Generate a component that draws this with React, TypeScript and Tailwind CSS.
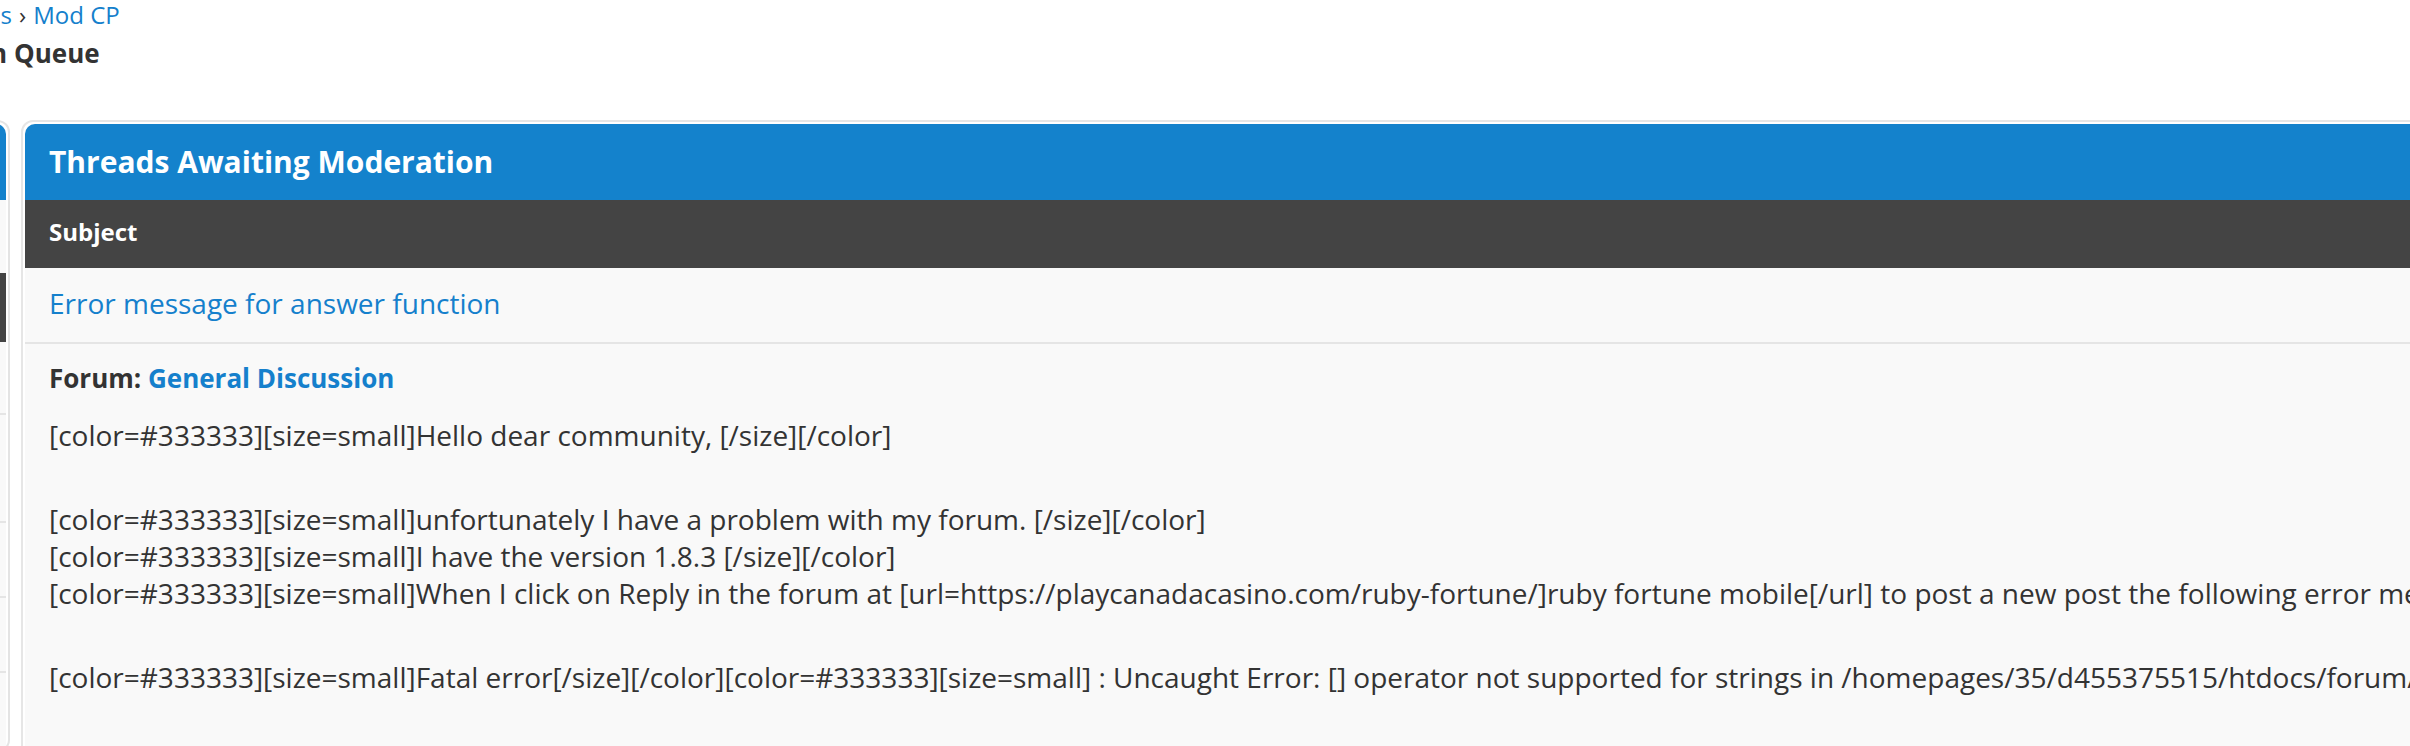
import React from "react";

const POST_LINES = [
  { text: "[color=#333333][size=small]Hello dear community, [/size][/color]", gap: false },
  { text: "[color=#333333][size=small]unfortunately I have a problem with my forum. [/size][/color]", gap: true },
  { text: "[color=#333333][size=small]I have the version 1.8.3 [/size][/color]", gap: false },
  {
    text: "[color=#333333][size=small]When I click on Reply in the forum at [url=https://playcanadacasino.com/ruby-fortune/]ruby fortune mobile[/url] to post a new post the following error message appears: [/size][/color]",
    gap: false,
  },
  {
    text: "[color=#333333][size=small]Fatal error[/size][/color][color=#333333][size=small] : Uncaught Error: [] operator not supported for strings in /homepages/35/d455375515/htdocs/forum/inc/functions.php:1541 [/size][/color]",
    gap: true,
  },
];

// sidebar rows below the dark bar (heights incl. 2px bottom border)
const SIDE_ROWS = ["h-[73px]", "h-[108px]", "h-[75px]", "h-[75px]", "h-[75px]"];

function Sidebar() {
  return (
    <div className="w-[400px] shrink-0 -ml-[390px] border-2 border-[#e4e4e4] rounded-[12px] p-[2px] bg-white">
      <div className="h-[76px] bg-[#1482cc] rounded-t-[10px]" />
      <div className="h-[73px] bg-[#f9f9f9]" />
      <div className="h-[69px] bg-[#444444]" />
      {SIDE_ROWS.map((h, i) => (
        <div key={i} className={`${h} bg-[#f9f9f9] border-b-2 border-[#e5e5e5]`} />
      ))}
    </div>
  );
}

function ModQueue() {
  return (
    <div className="w-[2600px] shrink-0 ml-[11px] border-2 border-[#e6e6e6] rounded-[12px] p-[2px] bg-white">
      <div className="h-[76px] bg-[#1482cc] rounded-t-[10px] px-[24px] text-[30px] leading-[76px] font-bold text-white">
        Threads Awaiting Moderation
      </div>
      <div className="h-[68px] bg-[#444444] px-[24px] text-[24px] leading-[64px] font-bold text-white">
        Subject
      </div>
      <div className="h-[76px] bg-[#f9f9f9] border-b-2 border-[#e5e5e5] px-[24px] text-[28px] leading-[70px]">
        <a className="text-[#1580cc]">Error message for answer function</a>
      </div>
      <div className="bg-[#f9f9f9] px-[24px] pt-[16px] pb-[60px]">
        <div className="text-[26px] leading-[36px] font-bold text-[#333]">
          Forum: <a className="text-[#1580cc]">General Discussion</a>
        </div>
        <div className="mt-[21px] text-[28px] leading-[37px] text-[#333] whitespace-nowrap">
          {POST_LINES.map((l, i) => (
            <div key={i} className={l.gap ? "mt-[47px]" : ""}>
              {l.text}
            </div>
          ))}
        </div>
      </div>
    </div>
  );
}

export default function App() {
  return (
    <div className="w-[2410px] h-[746px] overflow-hidden bg-white font-['Open_Sans',sans-serif] text-[#333]">
      <div className="flex items-baseline text-[24px] leading-[30px] whitespace-nowrap">
        <div className="w-[12px] flex justify-end overflow-hidden">
          <a className="text-[#1580cc]">Forums</a>
        </div>
        <span className="px-[7px] text-[#333]">›</span>
        <a className="text-[#1580cc]">Mod CP</a>
      </div>
      <div className="mt-[5px] flex text-[26px] leading-[36px] font-bold whitespace-nowrap">
        <div className="w-[7px] flex justify-end overflow-hidden">
          <span>Moderation</span>
        </div>
        <span className="pl-[7px]">Queue</span>
      </div>
      <div className="mt-[49px] flex items-start">
        <Sidebar />
        <ModQueue />
      </div>
    </div>
  );
}
